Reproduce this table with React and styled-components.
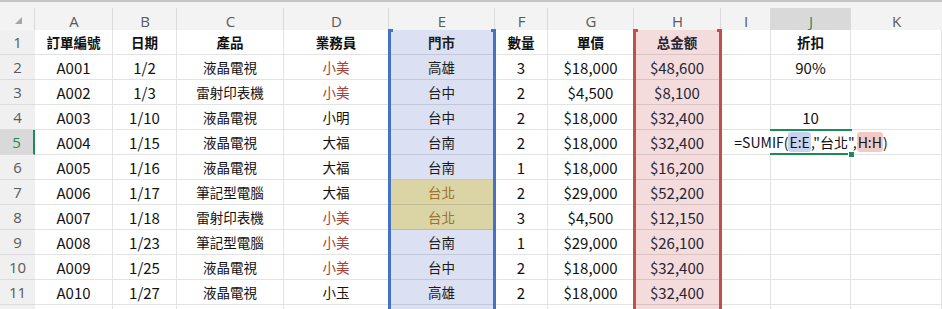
import React from 'react'
import styled, { createGlobalStyle, css } from 'styled-components'

const GlobalStyle = createGlobalStyle`
    html, body {
        margin: 0;
        padding: 0;
        height: 309px;
        overflow: hidden;
        background: #ffffff;
    }
    body {
        font-family: "Noto Sans CJK TC", "Noto Sans", sans-serif;
    }
`

const COLS = [
    { key: 'A', w: 78 },
    { key: 'B', w: 64 },
    { key: 'C', w: 107 },
    { key: 'D', w: 105 },
    { key: 'E', w: 106 },
    { key: 'F', w: 53 },
    { key: 'G', w: 86 },
    { key: 'H', w: 87 },
    { key: 'I', w: 50 },
    { key: 'J', w: 80 },
    { key: 'K', w: 91 },
]
const ROW_HEAD = 35
const template = `${ROW_HEAD}px ${COLS.map((c) => c.w + 'px').join(' ')}`

// left edge of a column, counted from the sheet's left side
const colLeft = (key) => {
    let x = ROW_HEAD
    for (const c of COLS) {
        if (c.key === key) return x
        x += c.w
    }
    return x
}
const colWidth = (key) => COLS.find((c) => c.key === key).w

const rows = [
    ['訂單編號', '日期', '產品', '業務員', '門市', '數量', '單價', '总金额', '', '折扣', ''],
    ['A001', '1/2', '液晶電視', '小美', '高雄', '3', '$18,000', '$48,600', '', '90%', ''],
    ['A002', '1/3', '雷射印表機', '小美', '台中', '2', '$4,500', '$8,100', '', '', ''],
    ['A003', '1/10', '液晶電視', '小明', '台中', '2', '$18,000', '$32,400', '', '10', ''],
    ['A004', '1/15', '液晶電視', '大福', '台南', '2', '$18,000', '$32,400', '', 'EDIT', ''],
    ['A005', '1/16', '液晶電視', '大福', '台南', '1', '$18,000', '$16,200', '', '', ''],
    ['A006', '1/17', '筆記型電腦', '大福', '台北', '2', '$29,000', '$52,200', '', '', ''],
    ['A007', '1/18', '雷射印表機', '小美', '台北', '3', '$4,500', '$12,150', '', '', ''],
    ['A008', '1/23', '筆記型電腦', '小美', '台南', '1', '$29,000', '$26,100', '', '', ''],
    ['A009', '1/25', '液晶電視', '小美', '台中', '2', '$18,000', '$32,400', '', '', ''],
    ['A010', '1/27', '液晶電視', '小玉', '高雄', '2', '$18,000', '$32,400', '', '', ''],
    ['', '', '', '', '', '', '', '', '', '', ''],
]

const GREEN = '#1d8a5a'
const isCjk = (s) => /[\u3400-\u9fff]/.test(s)

function cellTone(col, text) {
    if (col === 'E') return text === '台北' ? 'match' : 'blue'
    if (col === 'H') return 'pink'
    if (col === 'D' && text === '小美') return 'red'
    return 'plain'
}

function App() {
    return (
        <>
            <GlobalStyle />
            <Sheet>
                <TopStrip />
                <HeaderRow>
                    <Corner>
                        <CornerMark />
                    </Corner>
                    {COLS.map((c) => (
                        <ColHead key={c.key} $active={c.key === 'J'}>{c.key}</ColHead>
                    ))}
                </HeaderRow>
                <Body>
                    {rows.map((row, ri) => (
                        <Row key={ri}>
                            <RowHead $active={ri === 4}>{ri < 11 ? ri + 1 : ''}</RowHead>
                            {row.map((text, ci) => {
                                const col = COLS[ci].key
                                if (text === 'EDIT') {
                                    return (
                                        <EditCell key={col}>
                                            <Formula>
                                                =SUMIF(<Ref $tone="blue">E:E</Ref>,"台北",<Ref $tone="pink">H:H</Ref>)
                                            </Formula>
                                            <FillHandle />
                                        </EditCell>
                                    )
                                }
                                return (
                                    <Cell
                                        key={col}
                                        $tone={cellTone(col, text)}
                                        $cjk={isCjk(text)}
                                        $bold={ri === 0}
                                    >
                                        {text}
                                    </Cell>
                                )
                            })}
                        </Row>
                    ))}
                    <RangeFrame $left={colLeft('E') - 1} $width={colWidth('E') + 2} $color="#4472c4">
                        <Handle $side="left" $color="#4472c4" />
                        <Handle $side="right" $color="#4472c4" />
                    </RangeFrame>
                    <RangeFrame $left={colLeft('H') - 1} $width={colWidth('H') + 2} $color="#c0504d">
                        <Handle $side="left" $color="#c0504d" />
                        <Handle $side="right" $color="#c0504d" />
                    </RangeFrame>
                </Body>
            </Sheet>
        </>
    )
}

const Sheet = styled.div`
    width: 942px;
    height: 309px;
    overflow: hidden;
    display: flex;
    flex-direction: column;
    background: #fff;
`

const TopStrip = styled.div`
    height: 8px;
    flex: none;
    box-sizing: border-box;
    background: #f3f3f3;
    border-top: 2px solid #c4c4c4;
`

const HeaderRow = styled.div`
    display: grid;
    grid-template-columns: ${template};
    height: 22px;
    flex: none;
    background: #f3f3f3;
`

const Corner = styled.div`
    position: relative;
`

const CornerMark = styled.div`
    position: absolute;
    left: 15px;
    top: 9px;
    width: 0;
    height: 0;
    border-left: 7px solid transparent;
    border-bottom: 7px solid #a6a6a6;
`

const ColHead = styled.div`
    display: flex;
    align-items: center;
    justify-content: center;
    box-sizing: border-box;
    border-left: 1px solid #dadada;
    margin-left: -1px;
    font-family: "Open Sans", "Noto Sans", sans-serif;
    font-size: 15px;
    color: #5a5a5a;
    padding-top: 1px;
    ${(p) => p.$active && css`
        background: #d9d9d9;
        color: ${GREEN};
        border-bottom: 2px solid ${GREEN};
        padding-top: 3px;
    `}
`

const Body = styled.div`
    position: relative;
    flex: 1;
`

const Row = styled.div`
    display: grid;
    grid-template-columns: ${template};
    height: 25px;
`

const RowHead = styled.div`
    display: flex;
    align-items: center;
    justify-content: center;
    box-sizing: border-box;
    background: #f0f0f0;
    border-bottom: 1px solid #dcdcdc;
    font-family: "Open Sans", "Noto Sans", sans-serif;
    font-size: 15px;
    color: #5a5a5a;
    ${(p) => p.$active && css`
        background: #d9d9d9;
        color: ${GREEN};
        border-right: 2px solid ${GREEN};
    `}
`

const tones = {
    plain: css`background: #fff; color: #111;`,
    red: css`background: #fff; color: #a5423a;`,
    blue: css`background: #dbe1f3; color: #1c1c1c;`,
    match: css`background: #dbd4a4; color: #a0702e;`,
    pink: css`background: #f4dcdc; color: #262636;`,
}

const Cell = styled.div`
    display: flex;
    align-items: center;
    justify-content: center;
    box-sizing: border-box;
    border-right: 1px solid rgba(0, 0, 0, 0.11);
    border-bottom: 1px solid rgba(0, 0, 0, 0.11);
    white-space: nowrap;
    font-size: ${(p) => (p.$cjk ? '13.5px' : '15px')};
    font-weight: ${(p) => (p.$bold ? 700 : 400)};
    ${(p) => tones[p.$tone]}
`

const EditCell = styled.div`
    position: relative;
    display: flex;
    align-items: center;
    justify-content: center;
    box-sizing: border-box;
    border-bottom: 1px solid rgba(0, 0, 0, 0.11);
    &::before, &::after {
        content: '';
        position: absolute;
        left: -1px;
        right: -1px;
        height: 2px;
        background: ${GREEN};
        z-index: 3;
    }
    &::before { top: -1px; }
    &::after { bottom: -1px; }
`

const Formula = styled.span`
    position: relative;
    z-index: 2;
    background: #fff;
    padding: 1px 3px;
    white-space: nowrap;
    font-size: 14px;
    color: #111;
`

const Ref = styled.span`
    border-radius: 3px;
    padding: 0 1px;
    background: ${(p) => (p.$tone === 'blue' ? '#c7d3f1' : '#f3c9c5')};
`

const FillHandle = styled.div`
    position: absolute;
    right: -4px;
    bottom: -4px;
    width: 5px;
    height: 5px;
    background: ${GREEN};
    border: 1px solid #fff;
    z-index: 4;
`

const RangeFrame = styled.div`
    position: absolute;
    top: 0;
    bottom: 0;
    left: ${(p) => p.$left}px;
    width: ${(p) => p.$width}px;
    box-sizing: border-box;
    border-left: 3px solid ${(p) => p.$color};
    border-right: 3px solid ${(p) => p.$color};
    pointer-events: none;
`

const Handle = styled.div`
    position: absolute;
    top: -1px;
    ${(p) => (p.$side === 'left' ? 'left: -3px;' : 'right: -3px;')}
    width: 5px;
    height: 3px;
    background: ${(p) => p.$color};
`

export default App
